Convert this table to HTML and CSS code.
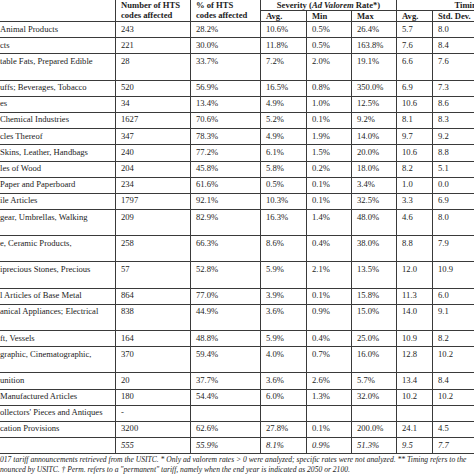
FILE: index.html
```html
<!DOCTYPE html>
<html>
<head>
<meta charset="utf-8">
<title>HTS tariff table</title>
<link rel="stylesheet" href="styles.css">
</head>
<body>
<div class="page">
  <table class="tbl">
    <colgroup>
      <col class="c-sec"><col class="c-num"><col class="c-pct"><col class="c-avg"><col class="c-min"><col class="c-max"><col class="c-tavg"><col class="c-tsd"><col class="c-tx">
    </colgroup>
    <thead>
      <tr>
        <th rowspan="2"></th>
        <th rowspan="2" class="l">Number of HTS<br>codes affected</th>
        <th rowspan="2" class="l">% of HTS<br>codes affected</th>
        <th colspan="3" class="grp">Severity (<i>Ad Valorem</i> Rate*)</th>
        <th colspan="3" class="grp">Timing**</th>
      </tr>
      <tr>
        <th class="l">Avg.</th><th class="l">Min</th><th class="l">Max</th><th class="l">Avg.</th><th class="l">Std. Dev.</th><th class="l">Min</th>
      </tr>
    </thead>
    <tbody>
      <tr><td class="sec">Animal Products</td><td>243</td><td>28.2%</td><td>10.6%</td><td>0.5%</td><td>26.4%</td><td>5.7</td><td>8.0</td><td></td></tr>
      <tr><td class="sec">cts</td><td>221</td><td>30.0%</td><td>11.8%</td><td>0.5%</td><td>163.8%</td><td>7.6</td><td>8.4</td><td></td></tr>
      <tr><td class="sec">table Fats, Prepared Edible<br>&nbsp;</td><td>28</td><td>33.7%</td><td>7.2%</td><td>2.0%</td><td>19.1%</td><td>6.6</td><td>7.6</td><td></td></tr>
      <tr><td class="sec">uffs; Beverages, Tobacco</td><td>520</td><td>56.9%</td><td>16.5%</td><td>0.8%</td><td>350.0%</td><td>6.9</td><td>7.3</td><td></td></tr>
      <tr><td class="sec">es</td><td>34</td><td>13.4%</td><td>4.9%</td><td>1.0%</td><td>12.5%</td><td>10.6</td><td>8.6</td><td></td></tr>
      <tr><td class="sec">Chemical Industries</td><td>1627</td><td>70.6%</td><td>5.2%</td><td>0.1%</td><td>9.2%</td><td>8.1</td><td>8.3</td><td></td></tr>
      <tr><td class="sec">cles Thereof</td><td>347</td><td>78.3%</td><td>4.9%</td><td>1.9%</td><td>14.0%</td><td>9.7</td><td>9.2</td><td></td></tr>
      <tr><td class="sec">Skins, Leather, Handbags</td><td>240</td><td>77.2%</td><td>6.1%</td><td>1.5%</td><td>20.0%</td><td>10.6</td><td>8.8</td><td></td></tr>
      <tr><td class="sec">les of Wood</td><td>204</td><td>45.8%</td><td>5.8%</td><td>0.2%</td><td>18.0%</td><td>8.2</td><td>5.1</td><td></td></tr>
      <tr><td class="sec">Paper and Paperboard</td><td>234</td><td>61.6%</td><td>0.5%</td><td>0.1%</td><td>3.4%</td><td>1.0</td><td>0.0</td><td></td></tr>
      <tr><td class="sec">ile Articles</td><td>1797</td><td>92.1%</td><td>10.3%</td><td>0.1%</td><td>32.5%</td><td>3.3</td><td>6.9</td><td></td></tr>
      <tr><td class="sec">gear, Umbrellas, Walking<br>&nbsp;</td><td>209</td><td>82.9%</td><td>16.3%</td><td>1.4%</td><td>48.0%</td><td>4.6</td><td>8.0</td><td></td></tr>
      <tr><td class="sec">e, Ceramic Products,<br>&nbsp;</td><td>258</td><td>66.3%</td><td>8.6%</td><td>0.4%</td><td>38.0%</td><td>8.8</td><td>7.9</td><td></td></tr>
      <tr><td class="sec">iprecious Stones, Precious<br>&nbsp;</td><td>57</td><td>52.8%</td><td>5.9%</td><td>2.1%</td><td>13.5%</td><td>12.0</td><td>10.9</td><td></td></tr>
      <tr><td class="sec">l Articles of Base Metal</td><td>864</td><td>77.0%</td><td>3.9%</td><td>0.1%</td><td>15.8%</td><td>11.3</td><td>6.0</td><td></td></tr>
      <tr><td class="sec">anical Appliances; Electrical<br>&nbsp;</td><td>838</td><td>44.9%</td><td>3.6%</td><td>0.9%</td><td>15.0%</td><td>14.0</td><td>9.1</td><td></td></tr>
      <tr><td class="sec">ft, Vessels</td><td>164</td><td>48.8%</td><td>5.9%</td><td>0.4%</td><td>25.0%</td><td>10.9</td><td>8.2</td><td></td></tr>
      <tr><td class="sec">graphic, Cinematographic,<br>&nbsp;</td><td>370</td><td>59.4%</td><td>4.0%</td><td>0.7%</td><td>16.0%</td><td>12.8</td><td>10.2</td><td></td></tr>
      <tr><td class="sec">unition</td><td>20</td><td>37.7%</td><td>3.6%</td><td>2.6%</td><td>5.7%</td><td>13.4</td><td>8.4</td><td></td></tr>
      <tr><td class="sec">Manufactured Articles</td><td>180</td><td>54.4%</td><td>6.0%</td><td>1.3%</td><td>32.0%</td><td>10.2</td><td>10.2</td><td></td></tr>
      <tr><td class="sec">ollectors' Pieces and Antiques</td><td>-</td><td></td><td></td><td></td><td></td><td></td><td></td><td></td></tr>
      <tr><td class="sec">cation Provisions</td><td>3200</td><td>62.6%</td><td>27.8%</td><td>0.1%</td><td>200.0%</td><td>24.1</td><td>4.5</td><td></td></tr>
      <tr class="total"><td class="sec"></td><td>555</td><td>55.9%</td><td>8.1%</td><td>0.9%</td><td>51.3%</td><td>9.5</td><td>7.7</td><td></td></tr>
    </tbody>
  </table>
  <p class="note">017 tariff announcements retrieved from the USITC. * Only ad valorem rates &gt; 0 were analyzed; specific rates were not analyzed. ** Timing refers to the<br>nounced by USITC. † Perm. refers to a "permanent" tariff, namely when the end year is indicated as 2050 or 2100.</p>
</div>
</body>
</html>
```
FILE: styles.css
```css
html, body {
  margin: 0;
  padding: 0;
  background: #ffffff;
}

.page {
  width: 474px;
  height: 474px;
  overflow: hidden;
  font-family: "Liberation Serif", "Times New Roman", serif;
  font-size: 8.6px;
  color: #1c1c1c;
}

.tbl {
  border-collapse: collapse;
  table-layout: fixed;
  width: 632px;
  margin: -1px 0 0 -85px;
}

.c-sec { width: 200px; }
.c-num { width: 75px; }
.c-pct { width: 70px; }
.c-avg { width: 46px; }
.c-min { width: 45px; }
.c-max { width: 45px; }
.c-tavg { width: 36px; }
.c-tsd { width: 50px; }
.c-tx { width: 65px; }

.tbl th,
.tbl td {
  border: 1px solid #3a3a3a;
  line-height: 10px;
  padding: 1.5px 5px 3.7px 5px;
  vertical-align: top;
  text-align: left;
  white-space: nowrap;
  overflow: hidden;
}

.tbl th {
  font-weight: bold;
  padding: 0 5px;
}

.tbl th.grp {
  text-align: center;
}

.tbl td.sec {
  padding-left: 84px;
}

.tbl tr.total td {
  font-style: italic;
}

.note {
  margin: 0;
  padding-top: 1px;
  font-size: 7.6px;
  font-style: italic;
  line-height: 9.4px;
  white-space: nowrap;
}
```
